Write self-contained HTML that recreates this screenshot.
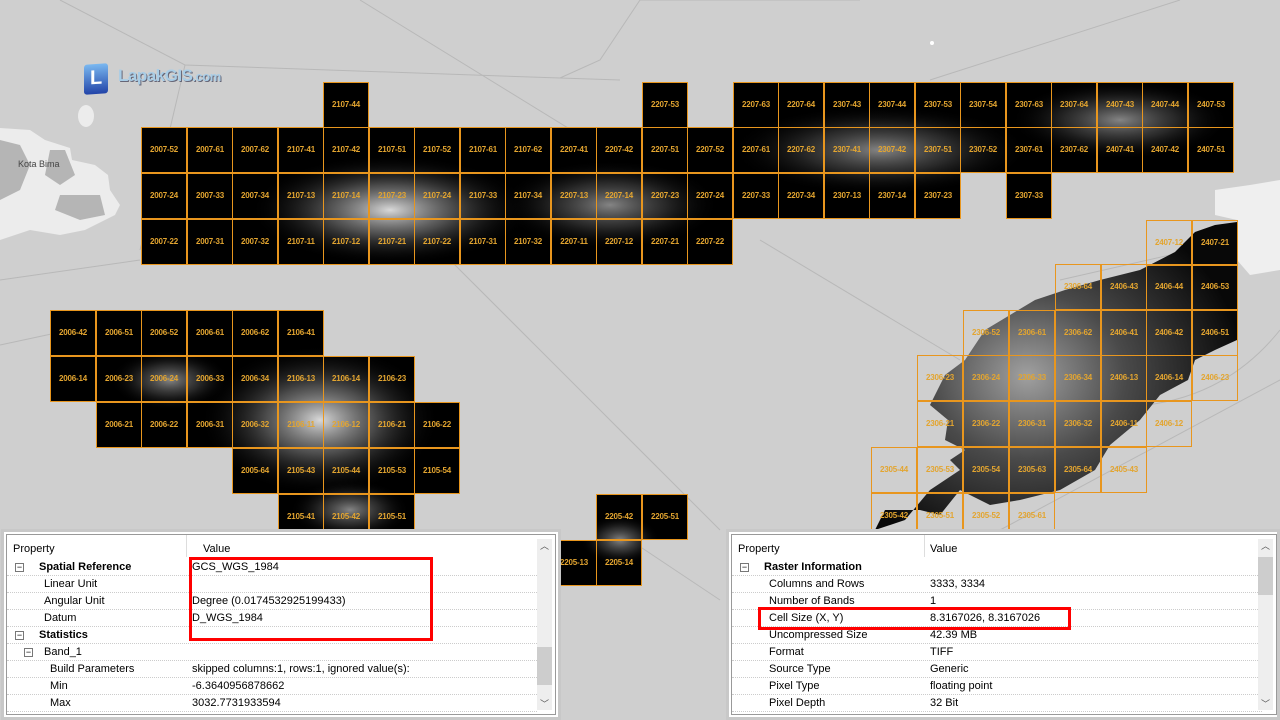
<!DOCTYPE html>
<html><head><meta charset="utf-8"><style>
*{margin:0;padding:0;box-sizing:border-box}
body{width:1280px;height:720px;overflow:hidden;background:#cfcfcf;position:relative;font-family:"Liberation Sans",Arial,sans-serif}
.t{position:absolute;width:46px;height:46px;border:1px solid #e8961e;font:bold 8px "Liberation Sans",Arial,sans-serif;color:#e3a530;text-align:center;line-height:44px;letter-spacing:-0.2px;z-index:3}
.panel{position:absolute;background:#fff;border:1px solid #999;z-index:5}
.row{position:absolute;left:0;height:17px;font-size:11px;color:#000;line-height:17px;border-bottom:1px dotted #ccc;white-space:nowrap}
.pm{display:inline-block;width:9px;height:9px;border:1px solid #777;font-size:9px;line-height:6px;text-align:center;position:absolute;top:4px}
.b{font-weight:bold}
.sb{position:absolute;right:3px;top:4px;width:15px;background:#eee;bottom:4px}
</style></head><body>
<svg style="position:absolute;left:0;top:0" width="1280" height="720">
<defs>
<radialGradient id="gw"><stop offset="0" stop-color="#fff" stop-opacity=".85"/><stop offset=".45" stop-color="#aaa" stop-opacity=".45"/><stop offset="1" stop-color="#000" stop-opacity="0"/></radialGradient>
<radialGradient id="gm"><stop offset="0" stop-color="#ddd" stop-opacity=".6"/><stop offset=".5" stop-color="#888" stop-opacity=".3"/><stop offset="1" stop-color="#000" stop-opacity="0"/></radialGradient>
<radialGradient id="isl" cx="0.42" cy="0.5" r="0.6"><stop offset="0" stop-color="#a0a0a0"/><stop offset="0.45" stop-color="#4a4a4a"/><stop offset="1" stop-color="#080808"/></radialGradient>
<clipPath id="tc">
<rect x="323" y="82" width="46" height="46"/><rect x="642" y="82" width="46" height="46"/><rect x="733" y="82" width="501" height="46"/>
<rect x="141" y="127" width="1093" height="46"/>
<rect x="141" y="173" width="820" height="46"/><rect x="1006" y="173" width="46" height="46"/>
<rect x="141" y="219" width="592" height="46"/>
<rect x="50" y="310" width="274" height="46"/><rect x="50" y="356" width="365" height="46"/><rect x="96" y="402" width="364" height="46"/>
<rect x="232" y="448" width="228" height="46"/><rect x="278" y="494" width="137" height="46"/>
<rect x="596" y="494" width="92" height="46"/><rect x="551" y="540" width="91" height="46"/>
</clipPath>
</defs>
<g stroke="#b8b8b8" fill="none" stroke-width="1">
<path d="M60 0 L185 65 L560 78 L620 80"/>
<path d="M185 65 L165 150 L140 250"/>
<path d="M0 345 L140 315"/>
<path d="M0 280 L140 260"/>
<path d="M360 0 L620 160 L640 160"/>
<path d="M640 0 L600 60 L560 78"/>
<path d="M640 0 L860 0"/>
<path d="M450 260 L720 530"/>
<path d="M760 240 L960 360"/>
<path d="M600 520 L720 600"/>
<path d="M930 80 L1180 0"/>
<path d="M1060 280 L1280 230"/>
<path d="M1050 400 Q1200 430 1280 330"/>
<path d="M1000 530 L1280 380"/>
</g>
<path d="M0 128 L30 130 L45 140 L70 148 L72 160 L95 165 L108 175 L110 190 L120 205 L115 215 L85 230 L60 235 L30 230 L0 240 Z" fill="#ececec"/>
<path d="M0 140 L20 145 L30 165 L20 190 L0 200 Z M50 150 L65 150 L75 175 L60 185 L45 175 Z M60 195 L100 195 L105 215 L80 220 L55 210 Z" fill="#b5b5b5"/>
<ellipse cx="86" cy="116" rx="8" ry="11" fill="#ececec"/>
<path d="M1215 190 L1250 185 L1280 180 L1280 270 L1250 275 L1237 260 L1237 220 L1215 215 Z" fill="#efefef"/>
<text x="18" y="167" font-size="9" fill="#444" font-family="Liberation Sans">Kota Bima</text>
<circle cx="932" cy="43" r="2" fill="#fff"/>
<path d="M1237 222 L1237 340 L1215 350 L1195 360 L1188 380 L1160 395 L1140 420 L1110 445 L1095 470 L1060 490 L1020 500 L990 505 L960 490 L940 515 L920 510 L885 510 L875 530 L905 520 L930 490 L960 470 L950 460 L965 450 L945 440 L948 420 L930 405 L945 375 L965 360 L985 330 L1010 315 L1035 300 L1065 290 L1100 280 L1140 270 L1175 252 L1195 232 L1215 225 Z" fill="url(#isl)"/>
<g clip-path="url(#tc)">
<rect x="0" y="0" width="1280" height="720" fill="#000"/>
<ellipse cx="390" cy="210" rx="140" ry="55" fill="url(#gw)"/>
<ellipse cx="610" cy="205" rx="110" ry="45" fill="url(#gm)"/>
<ellipse cx="880" cy="150" rx="150" ry="45" fill="url(#gm)"/>
<ellipse cx="1120" cy="120" rx="110" ry="40" fill="url(#gm)"/>
<ellipse cx="320" cy="420" rx="120" ry="75" fill="url(#gw)"/>
<ellipse cx="170" cy="380" rx="60" ry="30" fill="url(#gm)"/>
<ellipse cx="350" cy="510" rx="60" ry="30" fill="url(#gm)"/>
<ellipse cx="620" cy="540" rx="40" ry="25" fill="url(#gm)"/>
</g>
</svg>
<div style="position:absolute;left:84px;top:64px;width:24px;height:30px;background:linear-gradient(#7ab8f0,#2244a8);border-radius:3px;transform:skewY(-4deg)"><span style="position:absolute;left:6px;top:3px;color:#fff;font:bold 20px 'Liberation Sans'">L</span></div>
<div style="position:absolute;left:118px;top:66px;font:bold 17px 'Liberation Sans',sans-serif;color:#a9cde6;letter-spacing:-0.5px;text-shadow:1px 1px 0 #667">LapakGIS<span style="font-size:13px">.com</span></div>

<div class="t" style="left:323px;top:82px">2107-44</div>
<div class="t" style="left:642px;top:82px">2207-53</div>
<div class="t" style="left:733px;top:82px">2207-63</div>
<div class="t" style="left:778px;top:82px">2207-64</div>
<div class="t" style="left:824px;top:82px">2307-43</div>
<div class="t" style="left:869px;top:82px">2307-44</div>
<div class="t" style="left:915px;top:82px">2307-53</div>
<div class="t" style="left:960px;top:82px">2307-54</div>
<div class="t" style="left:1006px;top:82px">2307-63</div>
<div class="t" style="left:1051px;top:82px">2307-64</div>
<div class="t" style="left:1097px;top:82px">2407-43</div>
<div class="t" style="left:1142px;top:82px">2407-44</div>
<div class="t" style="left:1188px;top:82px">2407-53</div>

<div class="t" style="left:141px;top:127px">2007-52</div>
<div class="t" style="left:187px;top:127px">2007-61</div>
<div class="t" style="left:232px;top:127px">2007-62</div>
<div class="t" style="left:278px;top:127px">2107-41</div>
<div class="t" style="left:323px;top:127px">2107-42</div>
<div class="t" style="left:369px;top:127px">2107-51</div>
<div class="t" style="left:414px;top:127px">2107-52</div>
<div class="t" style="left:460px;top:127px">2107-61</div>
<div class="t" style="left:505px;top:127px">2107-62</div>
<div class="t" style="left:551px;top:127px">2207-41</div>
<div class="t" style="left:596px;top:127px">2207-42</div>
<div class="t" style="left:642px;top:127px">2207-51</div>
<div class="t" style="left:687px;top:127px">2207-52</div>
<div class="t" style="left:733px;top:127px">2207-61</div>
<div class="t" style="left:778px;top:127px">2207-62</div>
<div class="t" style="left:824px;top:127px">2307-41</div>
<div class="t" style="left:869px;top:127px">2307-42</div>
<div class="t" style="left:915px;top:127px">2307-51</div>
<div class="t" style="left:960px;top:127px">2307-52</div>
<div class="t" style="left:1006px;top:127px">2307-61</div>
<div class="t" style="left:1051px;top:127px">2307-62</div>
<div class="t" style="left:1097px;top:127px">2407-41</div>
<div class="t" style="left:1142px;top:127px">2407-42</div>
<div class="t" style="left:1188px;top:127px">2407-51</div>

<div class="t" style="left:141px;top:173px">2007-24</div>
<div class="t" style="left:187px;top:173px">2007-33</div>
<div class="t" style="left:232px;top:173px">2007-34</div>
<div class="t" style="left:278px;top:173px">2107-13</div>
<div class="t" style="left:323px;top:173px">2107-14</div>
<div class="t" style="left:369px;top:173px">2107-23</div>
<div class="t" style="left:414px;top:173px">2107-24</div>
<div class="t" style="left:460px;top:173px">2107-33</div>
<div class="t" style="left:505px;top:173px">2107-34</div>
<div class="t" style="left:551px;top:173px">2207-13</div>
<div class="t" style="left:596px;top:173px">2207-14</div>
<div class="t" style="left:642px;top:173px">2207-23</div>
<div class="t" style="left:687px;top:173px">2207-24</div>
<div class="t" style="left:733px;top:173px">2207-33</div>
<div class="t" style="left:778px;top:173px">2207-34</div>
<div class="t" style="left:824px;top:173px">2307-13</div>
<div class="t" style="left:869px;top:173px">2307-14</div>
<div class="t" style="left:915px;top:173px">2307-23</div>
<div class="t" style="left:1006px;top:173px">2307-33</div>

<div class="t" style="left:141px;top:219px">2007-22</div>
<div class="t" style="left:187px;top:219px">2007-31</div>
<div class="t" style="left:232px;top:219px">2007-32</div>
<div class="t" style="left:278px;top:219px">2107-11</div>
<div class="t" style="left:323px;top:219px">2107-12</div>
<div class="t" style="left:369px;top:219px">2107-21</div>
<div class="t" style="left:414px;top:219px">2107-22</div>
<div class="t" style="left:460px;top:219px">2107-31</div>
<div class="t" style="left:505px;top:219px">2107-32</div>
<div class="t" style="left:551px;top:219px">2207-11</div>
<div class="t" style="left:596px;top:219px">2207-12</div>
<div class="t" style="left:642px;top:219px">2207-21</div>
<div class="t" style="left:687px;top:219px">2207-22</div>

<div class="t" style="left:50px;top:310px">2006-42</div>
<div class="t" style="left:96px;top:310px">2006-51</div>
<div class="t" style="left:141px;top:310px">2006-52</div>
<div class="t" style="left:187px;top:310px">2006-61</div>
<div class="t" style="left:232px;top:310px">2006-62</div>
<div class="t" style="left:278px;top:310px">2106-41</div>
<div class="t" style="left:50px;top:356px">2006-14</div>
<div class="t" style="left:96px;top:356px">2006-23</div>
<div class="t" style="left:141px;top:356px">2006-24</div>
<div class="t" style="left:187px;top:356px">2006-33</div>
<div class="t" style="left:232px;top:356px">2006-34</div>
<div class="t" style="left:278px;top:356px">2106-13</div>
<div class="t" style="left:323px;top:356px">2106-14</div>
<div class="t" style="left:369px;top:356px">2106-23</div>
<div class="t" style="left:96px;top:402px">2006-21</div>
<div class="t" style="left:141px;top:402px">2006-22</div>
<div class="t" style="left:187px;top:402px">2006-31</div>
<div class="t" style="left:232px;top:402px">2006-32</div>
<div class="t" style="left:278px;top:402px">2106-11</div>
<div class="t" style="left:323px;top:402px">2106-12</div>
<div class="t" style="left:369px;top:402px">2106-21</div>
<div class="t" style="left:414px;top:402px">2106-22</div>
<div class="t" style="left:232px;top:448px">2005-64</div>
<div class="t" style="left:278px;top:448px">2105-43</div>
<div class="t" style="left:323px;top:448px">2105-44</div>
<div class="t" style="left:369px;top:448px">2105-53</div>
<div class="t" style="left:414px;top:448px">2105-54</div>
<div class="t" style="left:278px;top:494px">2105-41</div>
<div class="t" style="left:323px;top:494px">2105-42</div>
<div class="t" style="left:369px;top:494px">2105-51</div>
<div class="t" style="left:596px;top:494px">2205-42</div>
<div class="t" style="left:642px;top:494px">2205-51</div>
<div class="t" style="left:551px;top:540px">2205-13</div>
<div class="t" style="left:596px;top:540px">2205-14</div>

<div class="t" style="left:1146px;top:220px">2407-12</div>
<div class="t" style="left:1192px;top:220px">2407-21</div>
<div class="t" style="left:1055px;top:264px">2306-64</div>
<div class="t" style="left:1101px;top:264px">2406-43</div>
<div class="t" style="left:1146px;top:264px">2406-44</div>
<div class="t" style="left:1192px;top:264px">2406-53</div>
<div class="t" style="left:963px;top:310px">2306-52</div>
<div class="t" style="left:1009px;top:310px">2306-61</div>
<div class="t" style="left:1055px;top:310px">2306-62</div>
<div class="t" style="left:1101px;top:310px">2406-41</div>
<div class="t" style="left:1146px;top:310px">2406-42</div>
<div class="t" style="left:1192px;top:310px">2406-51</div>
<div class="t" style="left:917px;top:355px">2306-23</div>
<div class="t" style="left:963px;top:355px">2306-24</div>
<div class="t" style="left:1009px;top:355px">2306-33</div>
<div class="t" style="left:1055px;top:355px">2306-34</div>
<div class="t" style="left:1101px;top:355px">2406-13</div>
<div class="t" style="left:1146px;top:355px">2406-14</div>
<div class="t" style="left:1192px;top:355px">2406-23</div>
<div class="t" style="left:917px;top:401px">2306-21</div>
<div class="t" style="left:963px;top:401px">2306-22</div>
<div class="t" style="left:1009px;top:401px">2306-31</div>
<div class="t" style="left:1055px;top:401px">2306-32</div>
<div class="t" style="left:1101px;top:401px">2406-11</div>
<div class="t" style="left:1146px;top:401px">2406-12</div>
<div class="t" style="left:871px;top:447px">2305-44</div>
<div class="t" style="left:917px;top:447px">2305-53</div>
<div class="t" style="left:963px;top:447px">2305-54</div>
<div class="t" style="left:1009px;top:447px">2305-63</div>
<div class="t" style="left:1055px;top:447px">2305-64</div>
<div class="t" style="left:1101px;top:447px">2405-43</div>
<div class="t" style="left:871px;top:493px">2305-42</div>
<div class="t" style="left:917px;top:493px">2305-51</div>
<div class="t" style="left:963px;top:493px">2305-52</div>
<div class="t" style="left:1009px;top:493px">2305-61</div>

<div class="panel" style="left:1px;top:529px;width:560px;height:191px;border:3px solid #c8c8c8;background:#fff">
 <div style="position:absolute;left:2px;top:2px;right:2px;bottom:2px;border:1px solid #999">
  <div class="row" style="top:6px;width:530px;border:none"><span style="position:absolute;left:6px">Property</span><span style="position:absolute;left:196px">Value</span></div>
  <div style="position:absolute;left:179px;top:0;height:22px;border-left:1px solid #ddd"></div>
  <div class="row" style="top:24px;width:530px"><span class="pm" style="left:8px">−</span><span class="b" style="position:absolute;left:32px">Spatial Reference</span><span style="position:absolute;left:185px">GCS_WGS_1984</span></div>
  <div class="row" style="top:41px;width:530px"><span style="position:absolute;left:37px">Linear Unit</span></div>
  <div class="row" style="top:58px;width:530px"><span style="position:absolute;left:37px">Angular Unit</span><span style="position:absolute;left:185px">Degree (0.0174532925199433)</span></div>
  <div class="row" style="top:75px;width:530px"><span style="position:absolute;left:37px">Datum</span><span style="position:absolute;left:185px">D_WGS_1984</span></div>
  <div class="row" style="top:92px;width:530px"><span class="pm" style="left:8px">−</span><span class="b" style="position:absolute;left:32px">Statistics</span></div>
  <div class="row" style="top:109px;width:530px"><span class="pm" style="left:17px">−</span><span style="position:absolute;left:37px">Band_1</span></div>
  <div class="row" style="top:126px;width:530px"><span style="position:absolute;left:43px">Build Parameters</span><span style="position:absolute;left:185px">skipped columns:1, rows:1, ignored value(s):</span></div>
  <div class="row" style="top:143px;width:530px"><span style="position:absolute;left:43px">Min</span><span style="position:absolute;left:185px">-6.3640956878662</span></div>
  <div class="row" style="top:160px;width:530px"><span style="position:absolute;left:43px">Max</span><span style="position:absolute;left:185px">3032.7731933594</span></div>
  <div class="sb"><div style="position:absolute;top:108px;height:38px;width:15px;background:#cdcdcd"></div><div style="font-size:9px;text-align:center;color:#555">︿</div><div style="position:absolute;bottom:0;width:15px;font-size:9px;text-align:center;color:#555">﹀</div></div>
 </div>
</div>
<div style="position:absolute;left:189px;top:557px;width:244px;height:84px;border:3px solid #f00;z-index:6"></div>

<div class="panel" style="left:726px;top:529px;width:554px;height:191px;border:3px solid #c8c8c8">
 <div style="position:absolute;left:2px;top:2px;right:0;bottom:2px;border:1px solid #999">
  <div class="row" style="top:6px;width:530px;border:none"><span style="position:absolute;left:6px">Property</span><span style="position:absolute;left:198px">Value</span></div>
  <div style="position:absolute;left:192px;top:0;height:22px;border-left:1px solid #ddd"></div>
  <div class="row" style="top:24px;width:530px"><span class="pm" style="left:8px">−</span><span class="b" style="position:absolute;left:32px">Raster Information</span></div>
  <div class="row" style="top:41px;width:530px"><span style="position:absolute;left:37px">Columns and Rows</span><span style="position:absolute;left:198px">3333, 3334</span></div>
  <div class="row" style="top:58px;width:530px"><span style="position:absolute;left:37px">Number of Bands</span><span style="position:absolute;left:198px">1</span></div>
  <div class="row" style="top:75px;width:530px"><span style="position:absolute;left:37px">Cell Size (X, Y)</span><span style="position:absolute;left:198px">8.3167026, 8.3167026</span></div>
  <div class="row" style="top:92px;width:530px"><span style="position:absolute;left:37px">Uncompressed Size</span><span style="position:absolute;left:198px">42.39 MB</span></div>
  <div class="row" style="top:109px;width:530px"><span style="position:absolute;left:37px">Format</span><span style="position:absolute;left:198px">TIFF</span></div>
  <div class="row" style="top:126px;width:530px"><span style="position:absolute;left:37px">Source Type</span><span style="position:absolute;left:198px">Generic</span></div>
  <div class="row" style="top:143px;width:530px"><span style="position:absolute;left:37px">Pixel Type</span><span style="position:absolute;left:198px">floating point</span></div>
  <div class="row" style="top:160px;width:530px"><span style="position:absolute;left:37px">Pixel Depth</span><span style="position:absolute;left:198px">32 Bit</span></div>
  <div class="sb"><div style="position:absolute;top:18px;height:38px;width:15px;background:#cdcdcd"></div><div style="font-size:9px;text-align:center;color:#555">︿</div><div style="position:absolute;bottom:0;width:15px;font-size:9px;text-align:center;color:#555">﹀</div></div>
 </div>
</div>
<div style="position:absolute;left:758px;top:607px;width:313px;height:23px;border:3px solid #f00;z-index:6"></div>
</body></html>
